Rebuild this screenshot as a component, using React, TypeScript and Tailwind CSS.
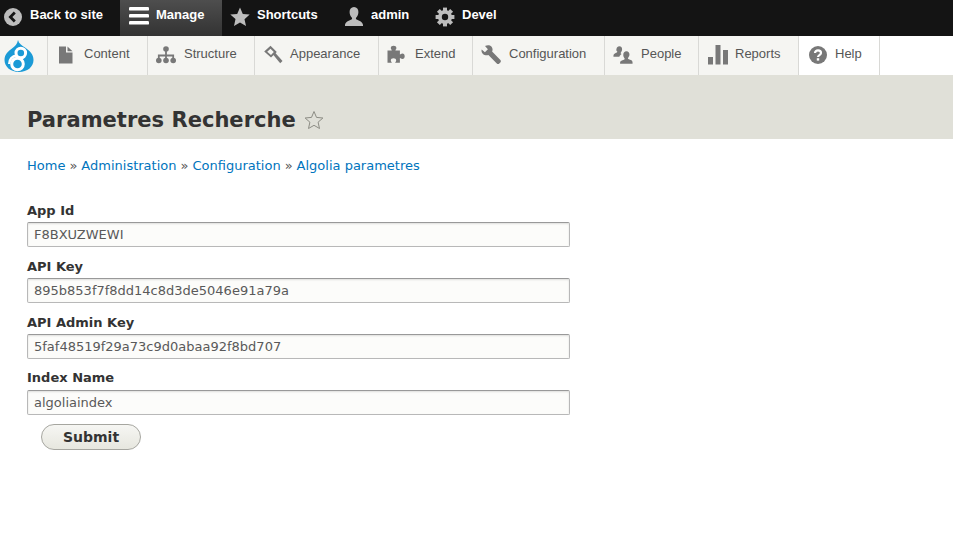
import React from "react";

const BackIcon = () => (
  <svg width="18" height="18" viewBox="0 0 18 18" className="shrink-0">
    <circle cx="9" cy="9" r="9" fill="#bdbdbd" />
    <path d="M10.8 4.600 6.400 9l4.400 4.400" fill="none" stroke="#141414" strokeWidth="2.800" />
  </svg>
);
const MenuIcon = () => (
  <svg width="20" height="20" viewBox="0 0 20 20" className="shrink-0">
    <rect x="0" y="1" width="20" height="3.600" rx="1.200" fill="#fff" />
    <rect x="0" y="8" width="20" height="3.600" rx="1.200" fill="#fff" />
    <rect x="0" y="15" width="20" height="3.600" rx="1.200" fill="#fff" />
  </svg>
);
const StarIcon = () => (
  <svg width="20" height="20" viewBox="0 0 20 20" className="shrink-0">
    <path d="M10 .5l2.800 6.400 6.900.7-5.200 4.600 1.500 6.800L10 15.400 4 18.900l1.500-6.800L.3 7.600l6.900-.7z" fill="#bdbdbd" />
  </svg>
);
const UserIcon = () => (
  <svg width="20" height="20" viewBox="0 0 20 20" className="shrink-0">
    <path d="M10 0c2.900 0 4.400 2.200 4.400 5 0 2.300-1 4.400-2.100 5.400-.6.6-.5 1.600.2 2 1.500.8 6.500 2.200 6.500 5.600v1H1v-1c0-3.400 5-4.800 6.500-5.600.7-.4.8-1.400.2-2C6.600 9.400 5.600 7.300 5.600 5 5.600 2.200 7.100 0 10 0z" fill="#bdbdbd" />
  </svg>
);
const GearIcon = () => (
  <svg width="20" height="20" viewBox="0 0 20 20" className="shrink-0">
    <g fill="#bdbdbd">
      <circle cx="10" cy="10" r="7" />
      {[0, 45, 90, 135, 180, 225, 270, 315].map((a) => (
        <rect key={a} x="8" y="0.6" width="4" height="4" transform={`rotate(${a} 10 10)`} />
      ))}
    </g>
    <circle cx="10" cy="10" r="3.200" fill="#141414" />
  </svg>
);

const DrupalLogo = () => (
  <svg width="30" height="32" viewBox="0 0 30 32" className="shrink-0">
    <path d="M14 0c.8 3.600 3.800 5.300 7 7.500 4.500 3.100 8.500 6.500 8.500 12.500 0 7-6.300 12-14.500 12S.5 27 .5 20C.5 14 4.500 11 8 8.500 11 6.400 13.300 4 14 0z" fill="#1b9ad6" />
    <circle cx="16.800" cy="13" r="4.800" fill="#1b9ad6" stroke="#fff" strokeWidth="3" />
    <circle cx="13.500" cy="24" r="5.800" fill="#1b9ad6" stroke="#fff" strokeWidth="3" />
    <path d="M12.800 15.500C9 16 5.500 18.500 5.200 24" fill="none" stroke="#fff" strokeWidth="2.400" />
  </svg>
);

const g = "#787878";
const ContentIcon = () => (
  <svg width="16" height="20" viewBox="0 0 16 20">
    <path d="M1 1.500h7v6h6.500V18.500H1z" fill={g} />
    <path d="M9.500 1.500l5 4.700h-5z" fill={g} />
  </svg>
);
const StructureIcon = () => (
  <svg width="20" height="20" viewBox="0 0 20 20">
    <circle cx="10" cy="4" r="2.800" fill={g} />
    <circle cx="2.800" cy="15.500" r="2.800" fill={g} />
    <circle cx="10" cy="15.500" r="2.800" fill={g} />
    <circle cx="17.200" cy="15.500" r="2.800" fill={g} />
    <path d="M10 4v11M2.800 15V10.500h14.400V15" fill="none" stroke={g} strokeWidth="1.800" />
  </svg>
);
const AppearanceIcon = () => (
  <svg width="20" height="20" viewBox="0 0 20 20">
    <path d="M7.500.8 13.800 7.100 8 12.500 1.200 6.500zM7.500 3.800 4.200 6.700 8 10l2.800-2.900z" fill={g} fillRule="evenodd" />
    <path d="M10 9.500l2-2 7.500 8.500-2.300 2.300z" fill={g} />
  </svg>
);
const ExtendIcon = () => (
  <svg width="20" height="20" viewBox="0 0 20 20">
    <path d="M.5 5.500h4.200c.4-.6-.9-1-.9-2.500C3.800 1.500 5 .8 6.600.8 8.200.8 9.400 1.500 9.400 3c0 1.500-1.300 1.900-.9 2.500h4.400v4c.5.400 1-.9 2.500-.9 1.500 0 2.300 1.200 2.300 2.700s-.8 2.700-2.300 2.700c-1.500 0-2-1.300-2.500-.9v4.700H8.300c-.5-.5.900-1 .9-2.500 0-1.200-1.100-2-2.700-2s-2.700.8-2.700 2c0 1.500 1.400 2 .9 2.500H.5z" fill={g} />
  </svg>
);
const WrenchIcon = () => (
  <svg width="20" height="20" viewBox="0 0 20 20">
    <path d="M.7 4.400 3.900 7.200 6.900 4.200 4 .9C6.300-.3 9-.1 10.400 1.500c1.300 1.400 1.500 3.400.7 5l8.300 8.500c.6.700.6 1.800-.1 2.500l-1 1c-.7.700-1.800.7-2.500 0L7.400 10c-1.700.7-3.900.4-5.400-1.100C.7 7.700.2 6 .7 4.400z" fill={g} />
  </svg>
);
const PeopleIcon = () => (
  <svg width="20" height="20" viewBox="0 0 22 20">
    <path d="M7 .5c1.900 0 3 1.400 3 3.300 0 1.300-.6 2.700-1.300 3.400-.4.500-.2 1.100.2 1.300l.6.300c-1.100.7-2 1.600-2.500 3H.5v-1.300c0-2 3-2.800 3.800-3.200.5-.3.600-.9.200-1.300C3.700 5.300 3.500 4.200 3.800 3.300 4.200 1.500 5.300.5 7 .5z" fill={g} />
    <path d="M14.800 6c2.100 0 3.300 1.500 3.300 3.500 0 1.400-.7 2.800-1.400 3.500-.4.500-.3 1.200.2 1.500 1 .5 4.600 1.200 4.600 3.500v1.500H7.800V18.500c0-2.300 3.600-3 4.600-3.500.5-.3.600-1 .2-1.500-.7-.7-1.300-2.100-1.300-3.500C11.300 7.500 12.700 6 14.800 6z" fill={g} />
  </svg>
);
const ReportsIcon = () => (
  <svg width="20" height="20" viewBox="0 0 20 20">
    <rect x="0" y="12" width="5" height="7.500" fill={g} />
    <rect x="7.500" y="0" width="5" height="19.500" fill={g} />
    <rect x="15" y="5" width="5" height="14.500" fill={g} />
  </svg>
);
const HelpIcon = () => (
  <svg width="18" height="18" viewBox="0 0 18 18">
    <circle cx="9" cy="9" r="9" fill={g} />
    <path d="M6 7c0-1.800 1.300-2.700 3-2.700S12 5.300 12 6.900c0 2.100-3 2.200-3 4.100" fill="none" stroke="#fff" strokeWidth="2.200" />
    <rect x="7.800" y="12.200" width="2.400" height="2.400" fill="#fff" />
  </svg>
);

const trayItems = [
  { label: "Content", icon: <ContentIcon />, w: "w-[100px]", pl: "pl-[8px]", gap: "gap-[8px]" },
  { label: "Structure", icon: <StructureIcon />, w: "w-[107px]", pl: "pl-[8px]", gap: "gap-[8px]" },
  { label: "Appearance", icon: <AppearanceIcon />, w: "w-[124px]", pl: "pl-[8px]", gap: "gap-[7px]" },
  { label: "Extend", icon: <ExtendIcon />, w: "w-[94px]", pl: "pl-[8px]", gap: "gap-[8px]" },
  { label: "Configuration", icon: <WrenchIcon />, w: "w-[132px]", pl: "pl-[8px]", gap: "gap-[8px]" },
  { label: "People", icon: <PeopleIcon />, w: "w-[94px]", pl: "pl-[8px]", gap: "gap-[8px]" },
  { label: "Reports", icon: <ReportsIcon />, w: "w-[100px]", pl: "pl-[9px]", gap: "gap-[7px]" },
  { label: "Help", icon: <HelpIcon />, w: "w-[82px]", pl: "pl-[9px]", gap: "gap-[7px]", white: true },
];

const fields = [
  { label: "App Id", value: "F8BXUZWEWI", lh: "leading-[18px]" },
  { label: "API Key", value: "895b853f7f8dd14c8d3de5046e91a79a", lh: "leading-[18px]" },
  { label: "API Admin Key", value: "5faf48519f29a73c9d0abaa92f8bd707", lh: "leading-[18px]" },
  { label: "Index Name", value: "algoliaindex", lh: "leading-[16px]" },
];

export default function App() {
  return (
    <div className="min-h-[559px] bg-white font-['DejaVu_Sans',sans-serif] text-[13px] text-[#333]">
      <div className="flex h-[36px] bg-[#141414] font-['Liberation_Sans',sans-serif] text-[13px] font-bold text-white">
        <a className="flex w-[120px] items-start gap-[8px] pl-[4px] pt-[7px]">
          <span className="mt-[1px]"><BackIcon /></span>
          <span className="leading-[15px]">Back to site</span>
        </a>
        <a className="flex w-[102px] items-start gap-[7px] bg-gradient-to-b from-[#4e4e4e] to-[#333] pl-[9px] pt-[7px]">
          <span className="-mt-[1px]"><MenuIcon /></span>
          <span className="leading-[15px]">Manage</span>
        </a>
        <a className="flex w-[114px] items-start gap-[7px] pl-[8px] pt-[7px]">
          <span><StarIcon /></span>
          <span className="leading-[15px]">Shortcuts</span>
        </a>
        <a className="flex w-[91px] items-start gap-[7px] pl-[8px] pt-[7px]">
          <span><UserIcon /></span>
          <span className="leading-[15px]">admin</span>
        </a>
        <a className="flex items-start gap-[7px] pl-[8px] pt-[7px]">
          <span><GearIcon /></span>
          <span className="leading-[15px]">Devel</span>
        </a>
      </div>

      <div className="flex h-[39px] bg-white font-['Liberation_Sans',sans-serif] text-[13px] text-[#565656] shadow-[0_2px_1px_#a5a59c]">
        <div className="flex w-[47px] items-center bg-[#f5f5f2] pl-[4px]">
          <DrupalLogo />
        </div>
        {trayItems.map((t) => (
          <a
            key={t.label}
            className={`flex h-[39px] items-start border-l border-[#d9d9d6] pt-[9px] ${t.pl} ${t.gap} ${t.w} ${t.white ? "border-r bg-white" : "bg-[#f5f5f2]"}`}
          >
            <span className="flex h-[20px] w-[20px] shrink-0 items-center justify-center">{t.icon}</span>
            <span className="leading-[17px]">{t.label}</span>
          </a>
        ))}
      </div>

      <div className="flex h-[64px] items-start bg-[#e0e0d8] pl-[27px] pt-[30px]">
        <h1 className="text-[21.060px] leading-[30px] font-bold text-[#333]">Parametres Recherche</h1>
        <svg width="20" height="20" viewBox="0 0 20 20" className="ml-[8px] mt-[5px]">
          <path d="M10 1.500l2.500 5.900 6.400.6-4.800 4.200 1.400 6.300L10 15.300l-5.500 3.200 1.400-6.300L1.100 8l6.400-.6z" fill="none" stroke="#8c8c84" strokeWidth="1" />
        </svg>
      </div>

      <div className="px-[27px]">
        <nav className="flex gap-[4px] pt-[18px] leading-[17px] text-[#555]">
          <a className="text-[#0074bd]">Home</a>
          <span>»</span>
          <a className="text-[#0074bd]">Administration</a>
          <span>»</span>
          <a className="text-[#0074bd]">Configuration</a>
          <span>»</span>
          <a className="text-[#0074bd]">Algolia parametres</a>
        </nav>

        <form className="mt-[28px] flex w-[543px] flex-col gap-[11px]">
          {fields.map((f) => (
            <div key={f.label}>
              <label className={`block h-[20px] text-[13px] font-bold text-[#333] ${f.lh}`}>{f.label}</label>
              <input
                readOnly
                value={f.value}
                className="block h-[25px] w-full rounded-[2px] border border-t-[#999] border-r-[#b8b8b8] border-b-[#b8b8b8] border-l-[#b8b8b8] bg-[#fcfcfa] px-[6px] text-[13px] text-[#595959] shadow-[inset_0_1px_2px_rgba(0,0,0,0.12)] outline-none"
              />
            </div>
          ))}
          <button
            type="button"
            className="-mt-[2px] ml-[14px] h-[26px] w-[100px] rounded-[20px] border border-[#a6a6a0] bg-gradient-to-b from-[#f6f6f3] to-[#e7e7df] text-[14px] leading-[24px] font-bold text-[#333]"
          >
            Submit
          </button>
        </form>
      </div>
    </div>
  );
}
